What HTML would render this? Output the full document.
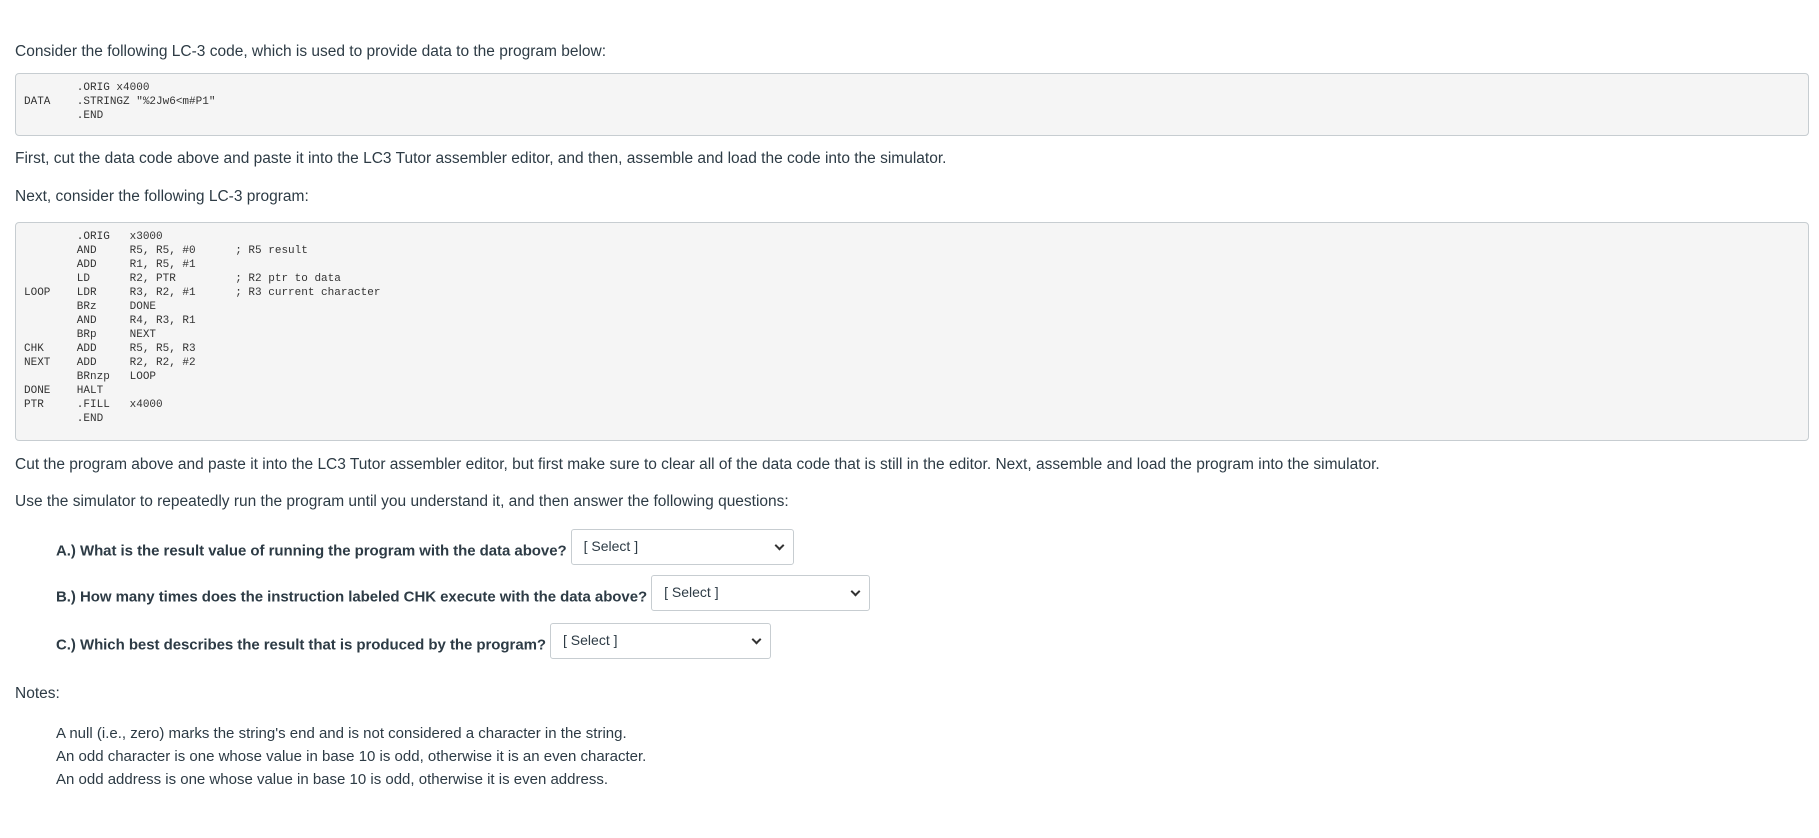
<!DOCTYPE html>
<html><head><meta charset="utf-8"><style>
body{margin:0;background:#fff;font-family:"Liberation Sans",sans-serif;color:#2d3b45;font-size:15.5px;}
.p{position:absolute;left:15px;white-space:nowrap}
.box{position:absolute;left:15px;width:1794px;background:#f5f5f5;border:1px solid #c7cdd1;border-radius:4px;box-sizing:border-box}
pre{margin:0;font-family:"Liberation Mono",monospace;font-size:11px;line-height:14px;color:#333;position:absolute;left:8px}
.sel{display:inline-block;vertical-align:middle;position:relative;height:36px;border:1px solid #c7cdd1;border-radius:3px;box-sizing:border-box;background:#fff;font-size:14px;font-weight:normal;color:#2d3b45;margin-left:4px;top:-4px}
.sel span{position:absolute;left:12px;top:8px}
.sel i{position:absolute;right:10px;top:12px;width:5px;height:5px;border-right:2px solid #333;border-bottom:2px solid #333;transform:rotate(45deg)}
.q{position:absolute;left:56px;white-space:nowrap}
.q b{font-size:15px;letter-spacing:-0.05px;vertical-align:middle}
</style></head><body>
<div class="p" style="top:43px">Consider the following LC-3 code, which is used to provide data to the program below:</div>
<div class="box" style="top:73px;height:63px"><pre style="top:7px">        .ORIG x4000
DATA    .STRINGZ "%2Jw6&lt;m#P1"
        .END</pre></div>
<div class="p" style="top:150px">First, cut the data code above and paste it into the LC3 Tutor assembler editor, and then, assemble and load the code into the simulator.</div>
<div class="p" style="top:188px">Next, consider the following LC-3 program:</div>
<div class="box" style="top:222px;height:219px"><pre style="top:7px">        .ORIG   x3000
        AND     R5, R5, #0      ; R5 result
        ADD     R1, R5, #1
        LD      R2, PTR         ; R2 ptr to data
LOOP    LDR     R3, R2, #1      ; R3 current character
        BRz     DONE
        AND     R4, R3, R1
        BRp     NEXT
CHK     ADD     R5, R5, R3
NEXT    ADD     R2, R2, #2
        BRnzp   LOOP
DONE    HALT
PTR     .FILL   x4000
        .END</pre></div>
<div class="p" style="top:456px">Cut the program above and paste it into the LC3 Tutor assembler editor, but first make sure to clear all of the data code that is still in the editor. Next, assemble and load the program into the simulator.</div>
<div class="p" style="top:493px">Use the simulator to repeatedly run the program until you understand it, and then answer the following questions:</div>
<div class="q" style="top:533px"><b>A.) What is the result value of running the program with the data above?</b><span class="sel" style="width:223px"><span>[ Select ]</span><i></i></span></div>
<div class="q" style="top:579px"><b>B.) How many times does the instruction labeled CHK execute with the data above?</b><span class="sel" style="width:219px"><span>[ Select ]</span><i></i></span></div>
<div class="q" style="top:627px"><b>C.) Which best describes the result that is produced by the program?</b><span class="sel" style="width:221px"><span>[ Select ]</span><i></i></span></div>
<div class="p" style="top:685px">Notes:</div>
<div class="p" style="left:56px;top:722px;line-height:23px;font-size:15px">A null (i.e., zero) marks the string's end and is not considered a character in the string.<br>An odd character is one whose value in base 10 is odd, otherwise it is an even character.<br>An odd address is one whose value in base 10 is odd, otherwise it is even address.</div>
</body></html>
